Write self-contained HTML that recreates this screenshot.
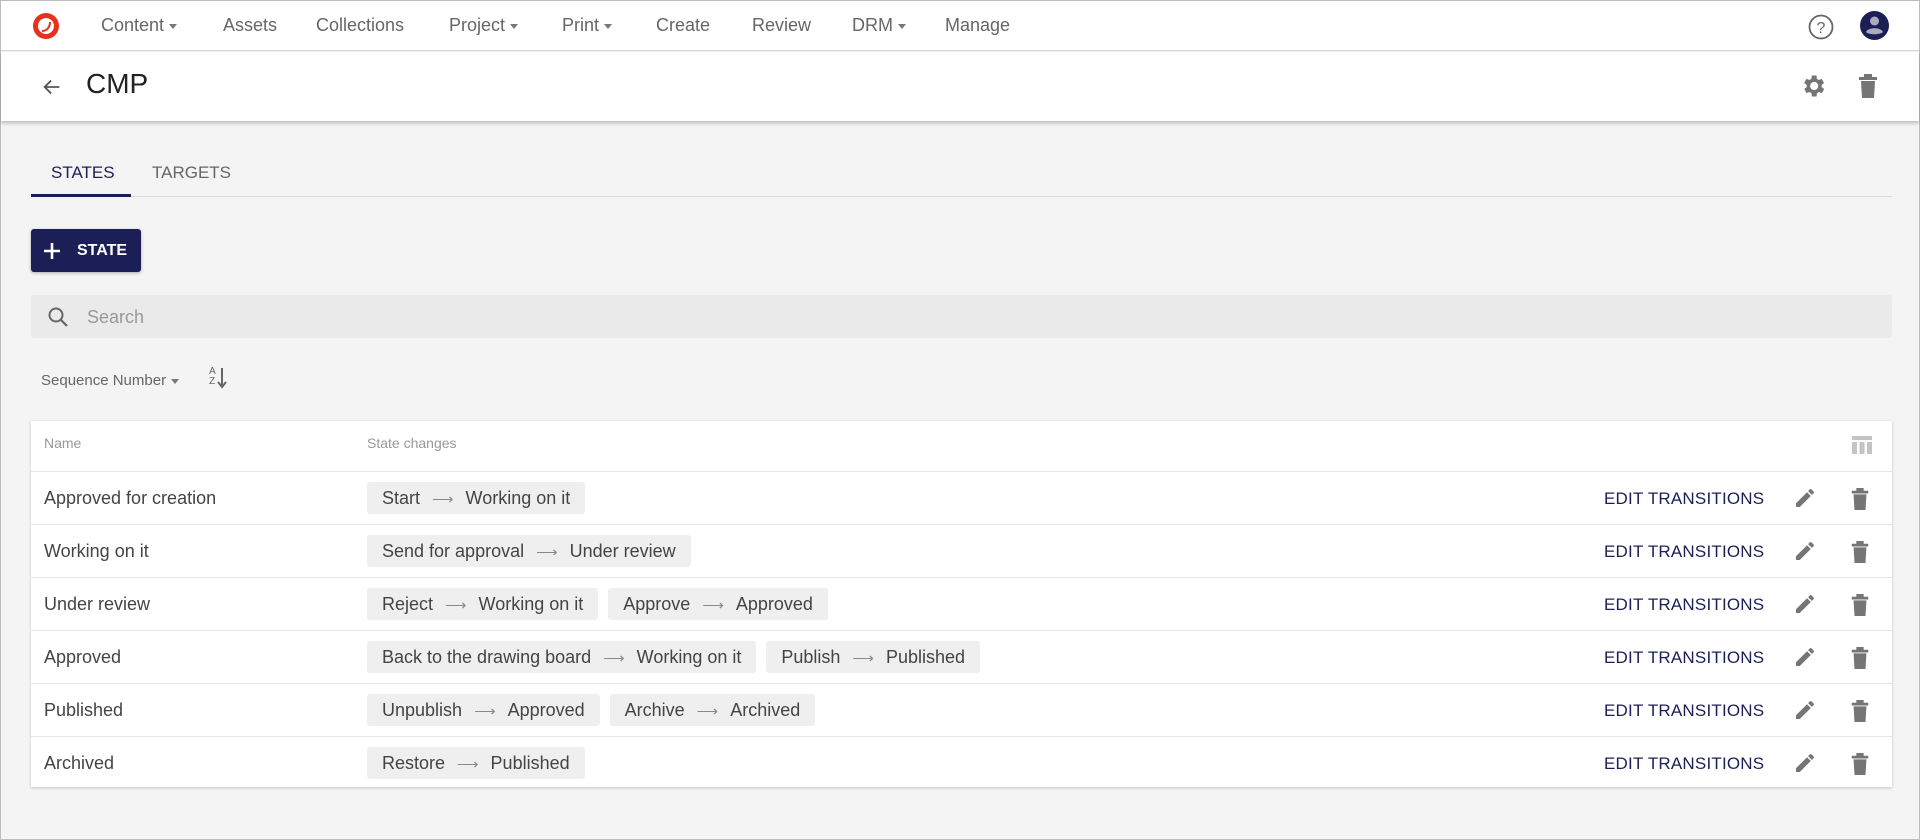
<!DOCTYPE html>
<html><head><meta charset="utf-8"><style>
*{box-sizing:border-box;margin:0;padding:0}
html,body{width:1920px;height:840px;overflow:hidden}
body{background:#f4f4f4;font-family:"Liberation Sans",sans-serif;color:#333;position:relative;border:1px solid #bdbdbd}
.nav{position:absolute;left:0;top:0;width:1918px;height:50px;background:#fff;border-bottom:1px solid #ddd}
.nav span{position:absolute;top:14px;font-size:18px;color:#666}
.caret{display:inline-block;width:0;height:0;border-left:4px solid transparent;border-right:4px solid transparent;border-top:5px solid #777;vertical-align:middle;margin-left:5px}
.hdr{position:absolute;left:0;top:51px;width:1918px;height:69px;background:#fff;box-shadow:0 2px 4px rgba(0,0,0,.25)}
.abs{position:absolute}
.tab{position:absolute;top:162px;font-size:17px}
.btn{position:absolute;left:30px;top:228px;width:110px;height:43px;background:#1b1f56;border-radius:3px;color:#fff;font-weight:bold;font-size:16px;box-shadow:0 1px 3px rgba(0,0,0,.3)}
.search{position:absolute;left:30px;top:294px;width:1861px;height:43px;background:#eaeaea;border-radius:3px}
.table{position:absolute;left:30px;top:420px;width:1861px;height:366px;background:#fff;box-shadow:0 1px 3px rgba(0,0,0,.2)}
.th{position:absolute;top:14px;font-size:14px;color:#999}
.row{position:absolute;left:0;width:1861px;height:53px;border-top:1px solid #e6e6e6}
.row .name{position:absolute;left:13px;top:16px;font-size:18px;color:#444}
.chips{position:absolute;left:336px;top:10px;display:flex;gap:10px}
.chip{background:#efefef;border-radius:3px;height:32px;line-height:32px;padding:0 15px;font-size:18px;color:#444;white-space:nowrap}
.chip i{font-style:normal;color:#888;margin:0 12px;font-size:15px}
.et{position:absolute;left:1573px;top:17px;font-size:17px;color:#1b1f56;letter-spacing:.2px}
.pen{position:absolute;left:1762px;top:14px}
.del{position:absolute;left:1818px;top:14px}
</style></head><body>
<div class="nav">
 <svg class="abs" style="left:30px;top:10px" width="30" height="30" viewBox="0 0 30 30"><circle cx="15" cy="15" r="13" fill="#e8301c"/><circle cx="15" cy="15" r="8" fill="#fff"/><path d="M11 20c5 0 8-4 8-9" stroke="#e8301c" stroke-width="2" fill="none"/></svg>
 <span style="left:100px">Content<i class="caret"></i></span>
 <span style="left:222px">Assets</span>
 <span style="left:315px">Collections</span>
 <span style="left:448px">Project<i class="caret"></i></span>
 <span style="left:561px">Print<i class="caret"></i></span>
 <span style="left:655px">Create</span>
 <span style="left:751px">Review</span>
 <span style="left:851px">DRM<i class="caret"></i></span>
 <span style="left:944px">Manage</span>
 <svg class="abs" style="left:1807px;top:13px" width="26" height="26" viewBox="0 0 26 26"><circle cx="13" cy="13" r="11.5" stroke="#666" stroke-width="1.8" fill="none"/><text x="13" y="19" text-anchor="middle" font-size="16" fill="#666" font-family="Liberation Sans">?</text></svg>
 <svg class="abs" style="left:1859px;top:10px" width="29" height="29" viewBox="0 0 29 29"><circle cx="14.5" cy="14.5" r="14.5" fill="#1b1f56"/><circle cx="14.5" cy="10" r="4.5" fill="#a9abbf"/><path d="M6 21c2-5 15-5 17 0c-3 3-14 3-17 0z" fill="#a9abbf"/></svg>
</div>
<div class="hdr">
 <svg class="abs" style="left:40px;top:24px" width="22" height="22" viewBox="0 0 24 24"><path d="M20 12H5M11 5l-7 7 7 7" stroke="#555" stroke-width="2" fill="none"/></svg>
 <div class="abs" style="left:85px;top:16px;font-size:28px;color:#222">CMP</div>
 <svg class="abs" style="left:1798px;top:20px" width="28" height="28" viewBox="0 0 24 24"><path fill="#757575" d="M19.4 13a7.5 7.5 0 000-2l2.1-1.6-2-3.5-2.5 1a7 7 0 00-1.7-1L15 3h-4l-.4 2.9a7 7 0 00-1.7 1l-2.5-1-2 3.5L6.6 11a7.5 7.5 0 000 2l-2.1 1.6 2 3.5 2.5-1a7 7 0 001.7 1L11 21h4l.4-2.9a7 7 0 001.7-1l2.5 1 2-3.5zM13 15.5a3.5 3.5 0 110-7 3.5 3.5 0 010 7z"/></svg>
 <svg class="abs" style="left:1855px;top:20px" width="24" height="28" viewBox="0 0 24 28"><path fill="#757575" d="M3 5h18v3H3zM8 2h8v3H8zM5 9h14l-1 17H6z"/></svg>
</div>
<div class="tab" style="left:50px;color:#1b1f56">STATES</div>
<div class="tab" style="left:151px;color:#666">TARGETS</div>
<div class="abs" style="left:30px;top:195px;width:1861px;height:1px;background:#ddd"></div>
<div class="abs" style="left:30px;top:193px;width:100px;height:3px;background:#1b1f56"></div>
<div class="btn"><svg class="abs" style="left:12px;top:13px" width="18" height="18" viewBox="0 0 18 18"><path d="M9 1v16M1 9h16" stroke="#fff" stroke-width="2.6"/></svg><span class="abs" style="left:46px;top:13px">STATE</span></div>
<div class="search">
 <svg class="abs" style="left:16px;top:11px" width="22" height="22" viewBox="0 0 22 22"><circle cx="9" cy="9" r="6.5" stroke="#666" stroke-width="2" fill="none"/><path d="M14 14l6 6" stroke="#666" stroke-width="2.2"/></svg>
 <span class="abs" style="left:56px;top:12px;font-size:18px;color:#999">Search</span>
</div>
<div class="abs" style="left:40px;top:371px;font-size:15px;color:#666">Sequence Number<i class="caret"></i></div>
<div class="abs" style="left:208px;top:366px;font-size:10px;color:#666;line-height:10px">A<br>Z</div>
<svg class="abs" style="left:216px;top:367px" width="10" height="22" viewBox="0 0 10 22"><path d="M5 0v18M1 14l4 5 4-5" stroke="#666" stroke-width="2" fill="none"/></svg>
<div class="table">
 <div class="th" style="left:13px">Name</div>
 <div class="th" style="left:336px">State changes</div>
 <svg class="abs" style="left:1820px;top:14px" width="22" height="20" viewBox="0 0 22 20"><path fill="#c4c4c4" d="M1 1h20v4H1zM1 7h5v12H1zM8.5 7h5v12h-5zM16 7h5v12h-5z"/></svg>
 <div class="row" style="top:50px"><div class="name">Approved for creation</div><div class="chips"><div class="chip">Start<i>⟶</i>Working on it</div></div><div class="et">EDIT TRANSITIONS</div><svg class="pen" width="24" height="24" viewBox="0 0 24 24"><path fill="#757575" d="M3 17.25V21h3.75L17.8 9.94l-3.75-3.75zM20.7 7.04a1 1 0 000-1.41l-2.34-2.34a1 1 0 00-1.41 0l-1.83 1.83 3.75 3.75z"/></svg><svg class="del" width="22" height="26" viewBox="0 0 24 28"><path fill="#757575" d="M3 5h18v3H3zM8 2h8v3H8zM5 9h14l-1 17H6z"/></svg></div>
 <div class="row" style="top:103px"><div class="name">Working on it</div><div class="chips"><div class="chip">Send for approval<i>⟶</i>Under review</div></div><div class="et">EDIT TRANSITIONS</div><svg class="pen" width="24" height="24" viewBox="0 0 24 24"><path fill="#757575" d="M3 17.25V21h3.75L17.8 9.94l-3.75-3.75zM20.7 7.04a1 1 0 000-1.41l-2.34-2.34a1 1 0 00-1.41 0l-1.83 1.83 3.75 3.75z"/></svg><svg class="del" width="22" height="26" viewBox="0 0 24 28"><path fill="#757575" d="M3 5h18v3H3zM8 2h8v3H8zM5 9h14l-1 17H6z"/></svg></div>
 <div class="row" style="top:156px"><div class="name">Under review</div><div class="chips"><div class="chip">Reject<i>⟶</i>Working on it</div><div class="chip">Approve<i>⟶</i>Approved</div></div><div class="et">EDIT TRANSITIONS</div><svg class="pen" width="24" height="24" viewBox="0 0 24 24"><path fill="#757575" d="M3 17.25V21h3.75L17.8 9.94l-3.75-3.75zM20.7 7.04a1 1 0 000-1.41l-2.34-2.34a1 1 0 00-1.41 0l-1.83 1.83 3.75 3.75z"/></svg><svg class="del" width="22" height="26" viewBox="0 0 24 28"><path fill="#757575" d="M3 5h18v3H3zM8 2h8v3H8zM5 9h14l-1 17H6z"/></svg></div>
 <div class="row" style="top:209px"><div class="name">Approved</div><div class="chips"><div class="chip">Back to the drawing board<i>⟶</i>Working on it</div><div class="chip">Publish<i>⟶</i>Published</div></div><div class="et">EDIT TRANSITIONS</div><svg class="pen" width="24" height="24" viewBox="0 0 24 24"><path fill="#757575" d="M3 17.25V21h3.75L17.8 9.94l-3.75-3.75zM20.7 7.04a1 1 0 000-1.41l-2.34-2.34a1 1 0 00-1.41 0l-1.83 1.83 3.75 3.75z"/></svg><svg class="del" width="22" height="26" viewBox="0 0 24 28"><path fill="#757575" d="M3 5h18v3H3zM8 2h8v3H8zM5 9h14l-1 17H6z"/></svg></div>
 <div class="row" style="top:262px"><div class="name">Published</div><div class="chips"><div class="chip">Unpublish<i>⟶</i>Approved</div><div class="chip">Archive<i>⟶</i>Archived</div></div><div class="et">EDIT TRANSITIONS</div><svg class="pen" width="24" height="24" viewBox="0 0 24 24"><path fill="#757575" d="M3 17.25V21h3.75L17.8 9.94l-3.75-3.75zM20.7 7.04a1 1 0 000-1.41l-2.34-2.34a1 1 0 00-1.41 0l-1.83 1.83 3.75 3.75z"/></svg><svg class="del" width="22" height="26" viewBox="0 0 24 28"><path fill="#757575" d="M3 5h18v3H3zM8 2h8v3H8zM5 9h14l-1 17H6z"/></svg></div>
 <div class="row" style="top:315px"><div class="name">Archived</div><div class="chips"><div class="chip">Restore<i>⟶</i>Published</div></div><div class="et">EDIT TRANSITIONS</div><svg class="pen" width="24" height="24" viewBox="0 0 24 24"><path fill="#757575" d="M3 17.25V21h3.75L17.8 9.94l-3.75-3.75zM20.7 7.04a1 1 0 000-1.41l-2.34-2.34a1 1 0 00-1.41 0l-1.83 1.83 3.75 3.75z"/></svg><svg class="del" width="22" height="26" viewBox="0 0 24 28"><path fill="#757575" d="M3 5h18v3H3zM8 2h8v3H8zM5 9h14l-1 17H6z"/></svg></div>
</div>
</body></html>
